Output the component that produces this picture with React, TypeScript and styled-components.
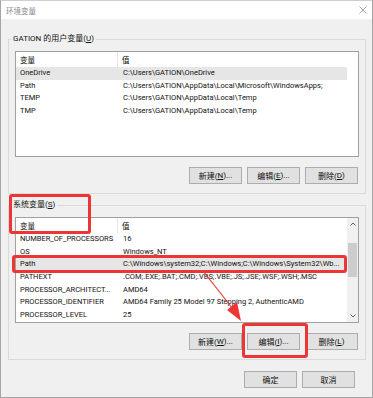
import React from 'react';
import styled, { createGlobalStyle } from 'styled-components';

const GlobalStyle = createGlobalStyle`
  html, body {
    margin: 0;
    padding: 0;
    background: #ffffff;
  }
  body {
    font-family: Roboto, "Noto Sans CJK SC", sans-serif;
    font-size: 8px;
    color: #111;
  }
`;

const RED = '#ee3535';

const Window = styled.div`
  position: relative;
  width: 373px;
  height: 398px;
  box-sizing: border-box;
  border: 1px solid #a4a4a4;
  border-top-color: #cfcfcf;
  background: #f0f0f0;
  display: flex;
  flex-direction: column;
  overflow: hidden;
`;

const TitleBar = styled.div`
  height: 18px;
  flex-shrink: 0;
  background: #fff;
  display: flex;
  align-items: center;
  justify-content: space-between;
  padding: 0 5px 0 5px;
`;

const Title = styled.span`
  font-size: 7.5px;
  color: #8a8a8a;
  font-family: "Noto Sans CJK SC", sans-serif;
`;

const Body = styled.div`
  display: flex;
  flex-direction: column;
  padding: 15px 6px 0 7px;
`;

const Group = styled.fieldset<{ $gap?: number }>`
  margin: ${(p) => p.$gap ?? 0}px 0 0 0;
  border: 1px solid #dadada;
  padding: 0 6px 9px 6px;
  min-width: 0;
`;

const Legend = styled.legend`
  margin-left: -4px;
  padding: 0 2px;
  line-height: 10px;
  font-size: 8px;
  color: #111;
`;

const List = styled.div`
  margin-top: 7px;
  height: 106px;
  box-sizing: border-box;
  border: 1px solid #a0a0a0;
  background: #fff;
  display: flex;
`;

const ListBody = styled.div`
  flex: 1;
  min-width: 0;
  display: flex;
  flex-direction: column;
`;

const Header = styled.div`
  height: 15px;
  flex-shrink: 0;
  display: grid;
  grid-template-columns: 102px 1fr;
  align-items: stretch;
`;

const HeaderCell = styled.div<{ $sep?: boolean }>`
  display: flex;
  align-items: center;
  padding-left: 4px;
  font-family: "Noto Sans CJK SC", sans-serif;
  font-size: 7.5px;
  border-right: ${(p) => (p.$sep ? '1px solid #e5e5e5' : 'none')};
`;

const Row = styled.div<{ $selected?: boolean }>`
  height: 12.6px;
  display: grid;
  grid-template-columns: 103px 1fr;
  align-items: center;
  background: ${(p) => (p.$selected ? '#e6e6e6' : 'transparent')};
`;

const Cell = styled.div`
  padding-left: 4px;
  white-space: nowrap;
  overflow: hidden;
  font-size: 7.5px;
  line-height: 12px;
`;

const ScrollGutter = styled.div`
  width: 11px;
  flex-shrink: 0;
`;

const ScrollBar = styled.div`
  width: 11px;
  flex-shrink: 0;
  background: #f0f0f0;
  display: flex;
  flex-direction: column;
`;

const ScrollArrow = styled.div`
  height: 12px;
  display: flex;
  align-items: center;
  justify-content: center;
`;

const Track = styled.div`
  flex: 1;
  padding-top: 13px;
`;

const Thumb = styled.div`
  height: 34px;
  margin: 0 1px;
  background: #cdcdcd;
`;

const ButtonRow = styled.div`
  margin-top: 10px;
  display: flex;
  justify-content: flex-end;
  gap: 5px;
  padding-right: 1px;
`;

const Button = styled.div`
  width: 53px;
  height: 17px;
  box-sizing: border-box;
  border: 1px solid #adadad;
  background: #e1e1e1;
  display: flex;
  align-items: center;
  justify-content: center;
  font-size: 8px;
  color: #111;
  white-space: nowrap;
`;

const Key = styled.span`
  text-decoration: underline;
`;

const Footer = styled.div`
  margin-top: 11px;
  display: flex;
  justify-content: flex-end;
  gap: 5px;
  padding-right: 11px;
`;

const Mark = styled.div`
  position: absolute;
  box-sizing: border-box;
  border: 3px solid ${RED};
  border-radius: 3px;
  pointer-events: none;
`;

const Overlay = styled.svg`
  position: absolute;
  left: -1px;
  top: -1px;
  pointer-events: none;
`;

const userVars = [
  ['OneDrive', 'C:\\Users\\GATION\\OneDrive'],
  ['Path', 'C:\\Users\\GATION\\AppData\\Local\\Microsoft\\WindowsApps;'],
  ['TEMP', 'C:\\Users\\GATION\\AppData\\Local\\Temp'],
  ['TMP', 'C:\\Users\\GATION\\AppData\\Local\\Temp'],
];

const sysVars = [
  ['NUMBER_OF_PROCESSORS', '16'],
  ['OS', 'Windows_NT'],
  ['Path', 'C:\\Windows\\system32;C:\\Windows;C:\\Windows\\System32\\Wb...'],
  ['PATHEXT', '.COM;.EXE;.BAT;.CMD;.VBS;.VBE;.JS;.JSE;.WSF;.WSH;.MSC'],
  ['PROCESSOR_ARCHITECT...', 'AMD64'],
  ['PROCESSOR_IDENTIFIER', 'AMD64 Family 25 Model 97 Stepping 2, AuthenticAMD'],
  ['PROCESSOR_LEVEL', '25'],
];

const Chevron = ({ up }: { up?: boolean }) => (
  <svg width="6" height="4" viewBox="0 0 6 4">
    <polyline
      points={up ? '0.5,3.5 3,1 5.5,3.5' : '0.5,0.5 3,3 5.5,0.5'}
      fill="none"
      stroke="#606060"
      strokeWidth="1"
    />
  </svg>
);

const VarList = ({ rows, selected, scroll }: { rows: string[][]; selected: string; scroll?: boolean }) => (
  <List>
    <ListBody>
      <Header>
        <HeaderCell $sep>变量</HeaderCell>
        <HeaderCell>值</HeaderCell>
      </Header>
      {rows.map(([name, value]) => (
        <Row key={name} $selected={name === selected}>
          <Cell>{name}</Cell>
          <Cell>{value}</Cell>
        </Row>
      ))}
    </ListBody>
    {scroll ? (
      <ScrollBar>
        <ScrollArrow>
          <Chevron up />
        </ScrollArrow>
        <Track>
          <Thumb />
        </Track>
        <ScrollArrow>
          <Chevron />
        </ScrollArrow>
      </ScrollBar>
    ) : (
      <ScrollGutter />
    )}
  </List>
);

const App = (): JSX.Element => (
  <>
    <GlobalStyle />
    <Window>
      <TitleBar>
        <Title>环境变量</Title>
        <svg width="8" height="8" viewBox="0 0 8 8">
          <path d="M0.5 0.5 L7.5 7.5 M7.5 0.5 L0.5 7.5" stroke="#9a9a9a" strokeWidth="0.9" />
        </svg>
      </TitleBar>
      <Body>
        <Group>
          <Legend>
            GATION 的用户变量(<Key>U</Key>)
          </Legend>
          <VarList rows={userVars} selected="OneDrive" />
          <ButtonRow>
            <Button>新建(<Key>N</Key>)...</Button>
            <Button>编辑(<Key>E</Key>)...</Button>
            <Button>删除(<Key>D</Key>)</Button>
          </ButtonRow>
        </Group>
        <Group $gap={6}>
          <Legend>
            系统变量(<Key>S</Key>)
          </Legend>
          <VarList rows={sysVars} selected="Path" scroll />
          <ButtonRow>
            <Button>新建(<Key>W</Key>)...</Button>
            <Button>编辑(<Key>I</Key>)...</Button>
            <Button>删除(<Key>L</Key>)</Button>
          </ButtonRow>
        </Group>
        <Footer>
          <Button>确定</Button>
          <Button>取消</Button>
        </Footer>
      </Body>

      <Mark style={{ left: 8, top: 193, width: 82, height: 40 }} />
      <Mark style={{ left: 11, top: 254, width: 335, height: 18 }} />
      <Mark style={{ left: 241, top: 322, width: 66, height: 35 }} />
      <Overlay width="373" height="398" viewBox="0 0 373 398">
        <line x1="203" y1="271" x2="233" y2="309" stroke={RED} strokeWidth="1.2" />
        <polygon points="241,321 227,310 237,302" fill={RED} />
      </Overlay>
    </Window>
  </>
);

export default App;
